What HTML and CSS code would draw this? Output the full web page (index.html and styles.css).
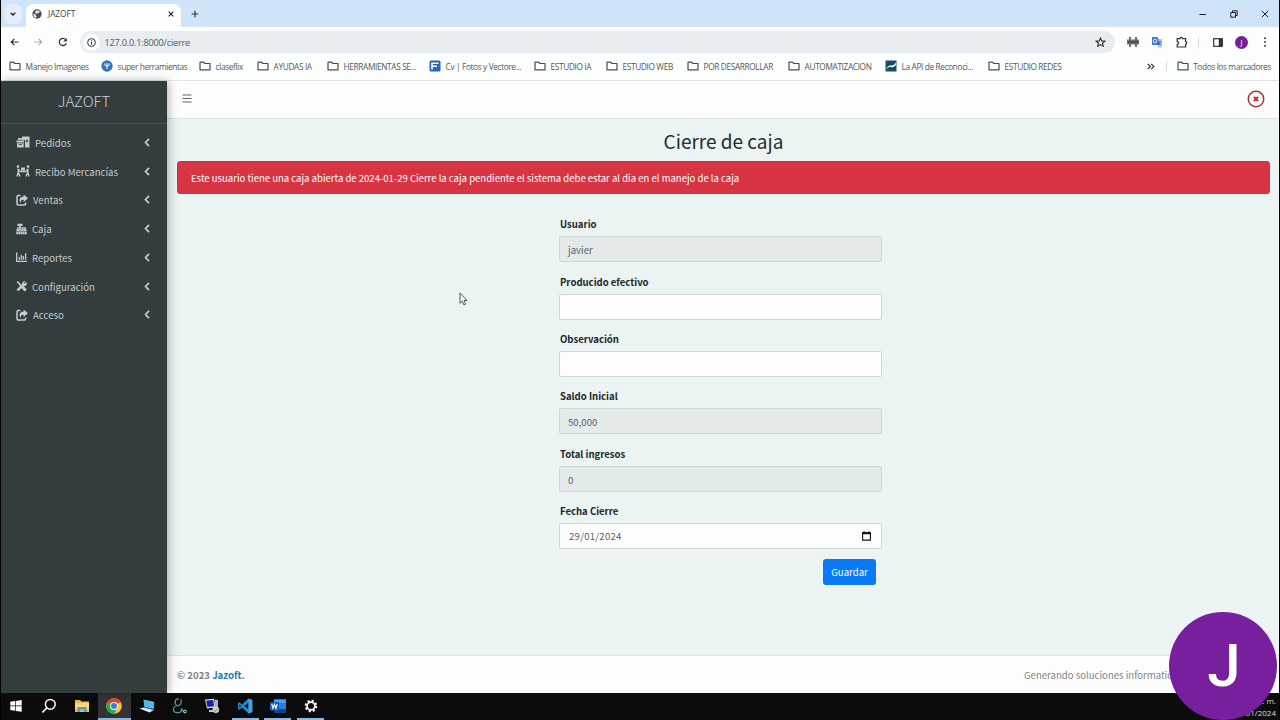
FILE: index.html
```html
<!DOCTYPE html>
<html lang="es">
<head>
<meta charset="utf-8">
<title>JAZOFT</title>
<link rel="stylesheet" href="styles.css">
</head>
<body>
<svg width="0" height="0" class="defs">
  <symbol id="folder" viewBox="0 0 12 10"><path d="M1 1.200h3.600l1.200 1.300H11v6.300H1z" fill="none" stroke="#4a4d50" stroke-width="1.200" stroke-linejoin="round"/></symbol>
  <symbol id="chev" viewBox="0 0 6 9"><path d="M5 .8 1.500 4.500 5 8.200" fill="none" stroke="#c5cccc" stroke-width="1.700"/></symbol>
  <symbol id="share" viewBox="0 0 12 12"><path d="M4.500 1.500H2.200Q1 1.500 1 2.700v7q0 1.200 1.200 1.200h6.200q1.200 0 1.200-1.200V8.500" fill="none" stroke="#c5cccc" stroke-width="1.500"/><path d="M7.600.4 12 4.200 7.600 8V5.800C5.200 5.800 4.500 7 5 9 2.400 6.500 3.500 2.700 7.600 2.600z" fill="#c5cccc"/></symbol>
</svg>
<div class="screen">
  <header class="tabs">
    <div class="tabsearch"><svg width="6" height="4" viewBox="0 0 6 4"><path d="M.7.7 3 3 5.300.7" fill="none" stroke="#222" stroke-width="1.300"/></svg></div>
    <div class="tab">
      <svg width="10" height="10" viewBox="0 0 10 10"><circle cx="5" cy="5" r="4.700" fill="#4b4f52"/><path d="M1 4.500 3 5.200 4.500 7.200 4 9 2 7.700zM4.800 1.200 7.800 2 7 4 5.400 3.600 5.300 5.200 3.600 4.300 3 3z" fill="#eceff1"/></svg>
      <span class="tabtitle">JAZOFT</span>
      <svg class="tabx" width="6" height="6" viewBox="0 0 6 6"><path d="M.7.7 5.300 5.300M5.300.7.7 5.300" stroke="#222" stroke-width="1.200"/></svg>
    </div>
    <svg class="plus" width="8" height="8" viewBox="0 0 8 8"><path d="M4 .7v6.600M.7 4h6.600" stroke="#333" stroke-width="1.200"/></svg>
    <div class="winbtns">
      <svg width="8" height="8" viewBox="0 0 8 8"><path d="M.5 4.500h6.500" stroke="#222"/></svg>
      <svg width="8" height="8" viewBox="0 0 8 8"><path d="M.8 2.500h4.700v4.700H.8zM2.500 2.200V.8h4.700v4.700H5.800" fill="none" stroke="#222"/></svg>
      <svg width="8" height="8" viewBox="0 0 8 8"><path d="M.8.8 7.200 7.200M7.200.8.8 7.200" stroke="#222"/></svg>
    </div>
  </header>
  <div class="toolbar">
    <svg class="nav1" width="9" height="8" viewBox="0 0 9 8"><path d="M8.500 4H1.200M4.400.8 1.200 4 4.400 7.200" fill="none" stroke="#333" stroke-width="1.200"/></svg>
    <svg class="nav2" width="9" height="8" viewBox="0 0 9 8"><path d="M.5 4h7.300M4.600.8 7.800 4 4.600 7.200" fill="none" stroke="#a9adb0" stroke-width="1.100"/></svg>
    <svg class="nav3" width="10" height="10" viewBox="0 0 10 10"><path d="M8.300 6.200A3.600 3.600 0 1 1 7.700 2.600" fill="none" stroke="#333" stroke-width="1.300"/><path d="M8.800.9v3.600H5.200z" fill="#333"/></svg>
    <div class="address">
      <div class="info"><svg width="9" height="9" viewBox="0 0 9 9"><circle cx="4.500" cy="4.500" r="3.900" fill="none" stroke="#333"/><path d="M4.500 4v2.600M4.500 2.200v1" stroke="#333"/></svg></div>
      <span class="url">127.0.0.1:8000/cierre</span>
      <svg class="star" width="11" height="10" viewBox="0 0 11 10"><path d="m5.500 1 1.250 2.900 3.150.3-2.400 2.050.75 3.050L5.500 7.650 2.750 9.300l.75-3.050L1.100 4.200l3.150-.3z" fill="none" stroke="#333" stroke-width="1.100"/></svg>
    </div>
    <div class="exts">
      <svg width="12" height="12" viewBox="0 0 12 12"><path d="M1 3.500v5M3 1v10M9 1v10M11 3.500v5" stroke="#2b2022" stroke-width="1.300"/><path d="M5 3.500v5M7 3.500v5" stroke="#2b2022" stroke-width="1.300"/><path d="M1 6h10" stroke="#2b2022" stroke-width=".8"/></svg>
      <svg width="12" height="12" viewBox="0 0 12 12"><path d="M5 3h6v8.500H7z" fill="#b7c4da"/><path d="M1 1h5.500l2.500 8H1z" fill="#4479d4"/><circle cx="4" cy="5" r="1.700" fill="none" stroke="#dce8ff"/><path d="M7.500 6h3M9 5v1L7.800 9M8 7l2 2" stroke="#3e66ad" stroke-width=".8" fill="none"/></svg>
      <svg width="12" height="12" viewBox="0 0 12 12"><path d="M1.200 2.700h2.900a1.250 1.250 0 0 1 2.500 0h3V5.500a1.250 1.250 0 0 1 0 2.500v3H1.200V8.300c2 0 2-2.600 0-2.600z" fill="none" stroke="#333" stroke-width="1.200"/></svg>
      <i class="sep"></i>
      <svg width="10" height="9" viewBox="0 0 10 9"><rect x=".7" y=".7" width="8.600" height="7.600" fill="none" stroke="#333" stroke-width="1.200"/><path d="M5.800.7h3.500v7.600H5.800z" fill="#333"/></svg>
      <span class="me">J</span>
      <svg width="4" height="10" viewBox="0 0 4 10"><circle cx="2" cy="1.300" r=".95" fill="#333"/><circle cx="2" cy="5" r=".95" fill="#333"/><circle cx="2" cy="8.700" r=".95" fill="#333"/></svg>
    </div>
  </div>
  <nav class="marks">
    <a class="b1"><svg><use href="#folder"/></svg>Manejo Imagenes</a>
    <a class="b2"><svg viewBox="0 0 12 12"><circle cx="6" cy="6" r="5.700" fill="#3475bd"/><path d="M3.500 3.500Q3.500 6 6 6t2.500-2.500M6 3v6" stroke="#fff" fill="none"/></svg>super herramientas</a>
    <a class="b3"><svg><use href="#folder"/></svg>claseflix</a>
    <a class="b4"><svg><use href="#folder"/></svg>AYUDAS IA</a>
    <a class="b5"><svg><use href="#folder"/></svg>HERRAMIENTAS SE...</a>
    <a class="b6"><svg viewBox="0 0 12 12"><rect x=".5" y=".5" width="11" height="11" rx="1.500" fill="#2864bd"/><path d="M3 9.500V3.200h6.500M3 6.200h5" stroke="#fff" stroke-width="1.600" fill="none"/></svg>Cv | Fotos y Vectore...</a>
    <a class="b7"><svg><use href="#folder"/></svg>ESTUDIO IA</a>
    <a class="b8"><svg><use href="#folder"/></svg>ESTUDIO WEB</a>
    <a class="b9"><svg><use href="#folder"/></svg>POR DESARROLLAR</a>
    <a class="b10"><svg><use href="#folder"/></svg>AUTOMATIZACION</a>
    <a class="b11"><svg viewBox="0 0 12 12"><path d="M.5.5h11v11H.5z" fill="#125069"/><path d="M1 9.500Q3 5 6 5.500T11 2.500V5Q8 8 6 7T1 9.500" fill="#fff"/></svg>La API de Reconoci...</a>
    <a class="b12"><svg><use href="#folder"/></svg>ESTUDIO REDES</a>
    <svg class="more" width="8" height="7" viewBox="0 0 8 7"><path d="m.7.8 2.700 2.700L.7 6.200M4.200.8l2.700 2.700-2.700 2.700" fill="none" stroke="#333" stroke-width="1.200"/></svg>
    <i class="sep"></i>
    <a class="b13"><svg><use href="#folder"/></svg>Todos los marcadores</a>
  </nav>
  <div class="app">
    <aside class="side">
      <div class="brand"><span>JAZOFT</span></div>
      <ul class="menu">
        <li><svg class="w14" viewBox="0 0 14 12"><path d="M6 .5h7.500v11H9V4H6zM.5 4.500h7.500v2H.5zM1 7.200h6.700v4.300H1zM2 2h4v1.700H2z" fill="#c5cccc"/><path d="M2.800 8.600h3M9.500 5h2.800M11 3.500V6.500" stroke="#333d3d" stroke-width=".9"/></svg><span>Pedidos</span><svg class="chev"><use href="#chev"/></svg></li>
        <li><svg class="w14" viewBox="0 0 14 12"><circle cx="2" cy="1.600" r="1.300" fill="#c5cccc"/><circle cx="12" cy="1.600" r="1.300" fill="#c5cccc"/><path d="M5 2.500h4v3H5z" fill="#c5cccc"/><path d="M2.200 3.500v4L.9 11.500M2.200 7.300l1.900 4.200M2.200 4.300 4.200 6.500h5.600l2-2.200M11.800 3.500v4l1.300 4M11.800 7.300l-1.900 4.200" fill="none" stroke="#c5cccc" stroke-width="1.350"/></svg><span>Recibo Mercancías</span><svg class="chev"><use href="#chev"/></svg></li>
        <li><svg class="w12"><use href="#share"/></svg><span>Ventas</span><svg class="chev"><use href="#chev"/></svg></li>
        <li><svg class="w11" viewBox="0 0 11 12"><path d="M1.500.8H6.500V3H4.500v1.300h5.200L10.700 8H.3l1-3.700H3V3H1.500zM.3 8.500h10.400v2.800H.3z" fill="#c5cccc"/><path d="M2.500 5.500h6.500M2.500 7h6.500M2 9.900h7" stroke="#333d3d" stroke-width=".5" stroke-dasharray="1.200 .8"/></svg><span>Caja</span><svg class="chev"><use href="#chev"/></svg></li>
        <li><svg class="w11" viewBox="0 0 11 12"><path d="M.7 1.500v8.800H11M3.300 8.800V6M5.300 8.800V3.700M7.300 8.800V5M9.600 8.800V2.300" fill="none" stroke="#c5cccc" stroke-width="1.300"/></svg><span>Reportes</span><svg class="chev"><use href="#chev"/></svg></li>
        <li><svg class="w11" viewBox="0 0 11 12"><path d="M1.200 1.500 9.500 10.300" stroke="#c5cccc" stroke-width="1.800"/><path d="m6.500 7 3.200 3.600" stroke="#c5cccc" stroke-width="3"/><path d="M1.400 10.300 7.500 4.500" stroke="#c5cccc" stroke-width="2.500"/><path d="M9.700 1 8 2.700l.8.900 1.800-1.700Q11.500 4.200 9.900 5.500T6.600 5.300Q5.700 3.200 6.900 1.900T9.700 1z" fill="#c5cccc"/></svg><span>Configuración</span><svg class="chev"><use href="#chev"/></svg></li>
        <li><svg class="w12"><use href="#share"/></svg><span>Acceso</span><svg class="chev"><use href="#chev"/></svg></li>
      </ul>
    </aside>
    <div class="content">
      <div class="topnav">
        <svg width="10" height="9" viewBox="0 0 10 9"><path d="M.5 1h9M.5 4.500h9M.5 8h9" stroke="#666" stroke-width="1.100"/></svg>
        <svg width="18" height="18" viewBox="0 0 18 18"><circle cx="9" cy="9" r="7.700" fill="none" stroke="#a93434" stroke-width="1.500"/><path d="m6.800 6.800 4.400 4.400M11.200 6.800l-4.400 4.400" stroke="#b32626" stroke-width="1.800"/></svg>
      </div>
      <main>
        <h1>Cierre de caja</h1>
        <div class="alert">Este usuario tiene una caja abierta de 2024-01-29 Cierre la caja pendiente el sistema debe estar al dia en el manejo de la caja</div>
        <form>
          <label>Usuario</label><div class="field off">javier</div>
          <label>Producido efectivo</label><div class="field"></div>
          <label>Observación</label><div class="field"></div>
          <label>Saldo Inicial</label><div class="field off">50,000</div>
          <label>Total ingresos</label><div class="field off">0</div>
          <label>Fecha Cierre</label><div class="field date"><span>29/01/2024</span><svg width="9" height="10" viewBox="0 0 9 10"><path d="M.6 1.700h7.800v7.400H.6z" fill="none" stroke="#111" stroke-width="1.100"/><path d="M.2 1.200h8.600v2H.2zM1.500.2h1.200v1.500H1.500zM6.300.2h1.200v1.500H6.300z" fill="#111"/></svg></div>
          <button type="button">Guardar</button>
        </form>
      </main>
      <footer><b>© 2023 <span>Jazoft.</span></b><span class="gen">Generando soluciones informaticas</span></footer>
    </div>
  </div>
  <div class="taskbar">
    <div class="t"><svg viewBox="0 0 16 16"><path d="m2.300 3.800 4.700-.7v4.500H2.300zM7.700 3l6-.9v5.500h-6zM2.300 8.300H7v4.500l-4.700-.7zM7.700 8.300h6v5.500l-6-.9z" fill="#fff"/></svg></div>
    <div class="t"><svg viewBox="0 0 16 16"><circle cx="9.300" cy="6.300" r="4.900" fill="none" stroke="#fff" stroke-width="1.500"/><path d="m6 9.700-4.700 4.800" stroke="#fff" stroke-width="1.600"/></svg></div>
    <div class="t"><svg viewBox="0 0 16 16"><path d="M1 2h5l1.500 1.500H15V14H1z" fill="#e9bd4c"/><path d="M1 5h14v6H1z" fill="#f6d97c"/><path d="M3.500 14V9h9v5H10v-2.500H6V14z" fill="#4d9ed0"/></svg></div>
    <div class="t on"><svg viewBox="0 0 16 16"><circle cx="8" cy="8" r="7.800" fill="#f4c63d"/><path d="M8 8 1.250 4.100A7.800 7.800 0 0 1 14.750 4.100z" fill="#db4437"/><path d="M8 8 1.250 4.100A7.800 7.800 0 0 0 8 15.800l3.400-5.900z" fill="#2da44e"/><circle cx="8" cy="8" r="3.900" fill="#fff"/><circle cx="8" cy="8" r="3" fill="#3b78d8"/></svg></div>
    <div class="t"><svg viewBox="0 0 16 16"><path d="m4.500 1.500 10.800 2.200-.5 7.300-9.500-2z" fill="#55b8e8"/><path d="m.5 10.500 4.500-1 10 2.500-4.500 2.500z" fill="#dfe8ed"/><path d="m5 8.800 9.800 2.300v1L5 9.800z" fill="#297ca8"/></svg></div>
    <div class="t"><svg viewBox="0 0 16 16"><path d="M7 1Q3.500.5 3.200 3.500T5 7.500Q8.500 8 9 5t-.5-3.500M5 7.500Q1 9 1.500 12t4.500 2.700 3.500-3 2.500 2.500" fill="none" stroke="#5d93a0" stroke-width="1.300"/><circle cx="13" cy="13.500" r="1.400" fill="none" stroke="#b2dce4"/></svg></div>
    <div class="t"><svg viewBox="0 0 16 16"><path d="m1 1.500 9-.8 1.500 8.800-8.500 1z" fill="#d7dce1"/><path d="m2.200 2.600 6.900-.6 1 6.200-6.600.8z" fill="#1722a8"/><path d="M10.500 1.500 14 2v9l-2.500-1z" fill="#aeb5bb"/><path d="M5 12h8v2H5z" fill="#c7c9c5"/><circle cx="11.800" cy="11.800" r="3.300" fill="#d7d7ca"/><path d="m9.800 12 1.500 1.500L14 10.500" stroke="#6c806c" fill="none"/></svg></div>
    <div class="t run"><svg viewBox="0 0 16 16"><path d="M11.500.5 15.300 2v12l-3.800 1.500L5 9.500 2.200 11.800 1 11V5l1.200-.8L5 6.500zM11.500 4.700 7.300 8l4.200 3.300zM2.500 6.300v3.400L4 8z" fill="#2489ca" fill-rule="evenodd"/><path d="M11.500.5 15.300 2v12l-3.800 1.500z" fill="#3ca5e8"/></svg></div>
    <div class="t run"><svg viewBox="0 0 16 16"><path d="M4 1.500h12v13H4z" fill="#2b7cd3"/><path d="M4 1.500h12V5H4z" fill="#41a5ee"/><path d="M4 11h12v3.500H4z" fill="#103f91"/><path d="M0 4h9v8.500H0z" fill="#185abd"/><path d="m1.800 6 1.200 4.500L4.500 6.300 6 10.500 7.200 6" stroke="#fff" fill="none" stroke-width="1.100"/></svg></div>
    <div class="t run"><svg viewBox="0 0 16 16"><circle cx="8" cy="8" r="5.300" fill="none" stroke="#fff" stroke-width="2" stroke-dasharray="2.100 2.062"/><circle cx="8" cy="8" r="3.900" fill="none" stroke="#fff" stroke-width="1.700"/></svg></div>
    <div class="clock"><span>p. m.</span><span>29/01/2024</span></div>
  </div>
  <svg class="cursor" width="9" height="14" viewBox="0 0 9 14"><path d="M1 1v10.300l2.300-2.100 1.600 3.700 1.700-.8L5 8.500h3z" fill="#f7faf9" stroke="#444" stroke-width=".9"/></svg>
  <div class="avatar">J</div>
</div>
</body>
</html>
```

FILE: styles.css
```css
* { box-sizing: border-box; }
body { margin: 0; background: #000; font-family: "Noto Sans CJK SC", "Noto Sans", sans-serif; }
svg { display: block; flex: none; }
.defs { position: absolute; }
.screen { position: relative; width: 1280px; height: 720px; overflow: hidden; padding: 0 1px; display: flex; flex-direction: column; }
.tabs, .toolbar, .marks { display: flex; align-items: center; font-family: "Open Sans", "Noto Sans", sans-serif; color: #55585b; white-space: nowrap; flex: none; }
.tabs { height: 27px; background: #cfe3f9; }
.tabsearch { width: 18px; height: 20px; margin-left: 3px; border-radius: 6px; background: #e2eefb; display: flex; align-items: center; justify-content: center; }
.tab { width: 155px; height: 23px; margin: 4px 0 0 4px; padding: 0 7px 4px 6px; background: #fdfdfe; border-radius: 7px 7px 0 0; display: flex; align-items: center; }
.tabtitle { font-size: 8.4px; letter-spacing: -.1px; margin-left: 6px; color: #444; }
.tabx { margin-left: auto; }
.plus { margin-left: 10px; }
.winbtns { display: flex; gap: 23px; margin-left: auto; margin-right: 10px; }
.toolbar { height: 28px; background: #fdfdfd; padding-top: 2px; }
.nav1 { margin-left: 9px; }
.nav2 { margin-left: 15px; }
.nav3 { margin-left: 15px; }
.address { width: 1035px; height: 22px; margin-left: 12px; background: #e7edf1; border-radius: 11px; display: flex; align-items: center; padding: 0 9px 0 3px; }
.info { width: 17px; height: 17px; border-radius: 50%; background: #fbfcfd; display: flex; align-items: center; justify-content: center; }
.url { font-size: 9.2px; letter-spacing: -.22px; margin-left: 4.5px; }
.star { margin-left: auto; }
.exts { display: flex; align-items: center; margin-left: 12px; gap: 12.3px; }
.sep { width: 1px; height: 10px; background: #cbdff0; }
.exts .sep { margin: 0 1.5px 0 -2px; }
.me { width: 13px; height: 13px; border-radius: 50%; background: #75209a; color: #fff; font-size: 7.5px; line-height: 13px; text-align: center; }
.exts > :last-child { margin-left: 3px; }
.marks { height: 26px; background: #fdfefe; border-bottom: 1px solid #dfe4e6; font-size: 8.3px; letter-spacing: -.37px; padding: 0 0 3px 8px; }
.marks a { display: flex; align-items: center; gap: 4.6px; flex: none; }
.marks a svg { width: 12px; height: 12px; }
.b1 { width: 92px; }
.b2 { width: 98px; }
.b3 { width: 58px; }
.b4 { width: 70px; }
.b5 { width: 102px; }
.b6 { width: 105px; }
.b7 { width: 72px; }
.b8 { width: 81px; }
.b9 { width: 101px; }
.b10 { width: 97px; }
.b11 { width: 103px; }
.more { margin-left: auto; }
.marks .sep { margin: 0 10px 0 11px; }
.b13 { margin-right: 8px; }
.app { display: flex; height: 612px; flex: none; }
.side { width: 166px; background: #333d3d; position: relative; z-index: 1; box-shadow: 2px 0 9px rgba(0,0,0,.28); }
.brand { height: 43px; border-bottom: 1px solid #485151; display: flex; align-items: center; justify-content: center; color: #c9cfcf; font-weight: 300; font-size: 15px; padding-bottom: 3px; }
.menu { list-style: none; margin: 4px 0 0; padding: 0 17px 0 15px; color: #c5cccc; font-size: 9.6px; }
.menu li { height: 28.75px; display: flex; align-items: center; }
.menu li > span { margin-left: 5px; padding-top: 1px; }
.w14 { width: 14px; height: 12px; }
.w12 { width: 12px; height: 12px; }
.w11 { width: 11px; height: 12px; }
.menu .chev { width: 6px; height: 9px; margin-left: auto; }
.content { flex: 1; display: flex; flex-direction: column; background: #ebf4f3; }
.topnav { height: 38px; background: #fdfdfd; border-bottom: 1px solid #dde5e5; display: flex; align-items: center; justify-content: space-between; padding: 0 14.5px 2px 15px; }
main { flex: 1; padding: 9px 9px 0 10px; }
h1 { margin: 0; height: 33px; line-height: 26px; text-align: center; font-size: 19px; font-weight: 400; color: #252b2e; }
.alert { height: 33px; line-height: 32px; border: 1px solid #cf3340; border-radius: 3px; background: #d83544; color: #fff; font-size: 9.55px; padding-left: 13px; white-space: nowrap; }
form { width: 323px; margin: 18.4px 0 0 382px; display: flex; flex-direction: column; }
label { height: 24px; line-height: 24px; font-size: 9.55px; font-weight: 700; color: #20282a; padding-left: 1px; }
.field { height: 26px; border: 1px solid #ced8d8; border-radius: 2px; background: #fdfdfd; margin-bottom: 7.35px; padding: 0 8px; line-height: 26px; font-size: 9.6px; color: #596366; }
.off { background: #e3eae9; }
.date { display: flex; align-items: center; justify-content: space-between; letter-spacing: .25px; padding: 0 10px 0 9px; }
button { width: 53px; height: 26px; margin: 3px 6px 0 auto; padding: 0; border: 0; border-radius: 3px; background: #087af5; color: #fff; font: 9.6px/26px "Noto Sans CJK SC", sans-serif; }
footer { height: 38px; background: #fdfdfd; border-top: 1px solid #dce4e4; padding: 0 10px; display: flex; align-items: center; color: #7d8586; font-size: 9.6px; }
footer b { width: 847px; flex: none; }
footer b span { color: #2879ad; }
.gen { white-space: nowrap; }
.taskbar { height: 27px; background: #0c0c0d; display: flex; flex: none; }
.t { width: 32.7px; height: 27px; display: flex; align-items: center; justify-content: center; flex: none; position: relative; left: -1px; border: solid transparent; border-width: 1px 0 2px; background-clip: border-box; }
.t svg { width: 16px; height: 16px; }
.on { background: #333336; border-color: #333336; border-bottom-color: #86b8e8; }
.run { background: linear-gradient(#86b8e8, #86b8e8) center bottom / 27px 2px no-repeat border-box; }
.clock { margin-left: auto; padding: 2px 3px 0 0; display: flex; flex-direction: column; align-items: flex-end; font: 8px/12px "Open Sans", sans-serif; color: #ddd; }
.cursor { position: absolute; left: 459px; top: 292px; }
.avatar { position: absolute; left: 1169px; top: 612px; width: 108px; height: 108px; border-radius: 50%; background: #771f9c; color: #fff; font: 500 60px/108px Roboto, sans-serif; text-align: center; padding-left: 2px; }
```
